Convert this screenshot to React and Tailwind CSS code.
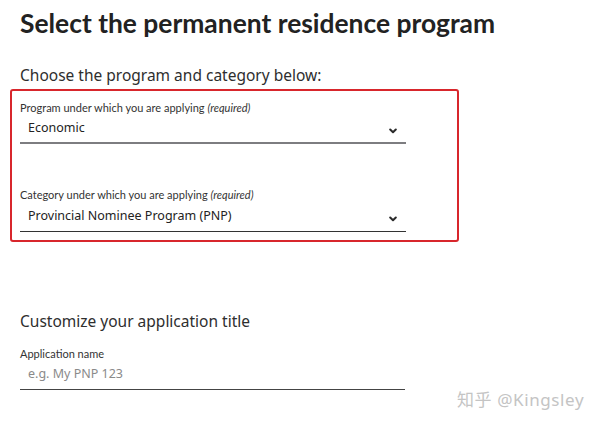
import React from "react";

function Chevron() {
  return (
    <svg width="8" height="6" viewBox="0 0 8 6" className="mt-[5px] shrink-0">
      <path d="M1.2 1.5 L4 4.3 L6.8 1.5" fill="none" stroke="#2a2a2a" strokeWidth="2" strokeLinecap="round" strokeLinejoin="round" />
    </svg>
  );
}

function SelectField({ label, value, rowClass }) {
  return (
    <div className="flex flex-col">
      <div className="font-['Lato'] text-[11px] leading-[14px] text-[#333]">
        {label} <em>(required)</em>
      </div>
      <div className={`w-[386px] flex items-center justify-between pl-[8px] pr-[9px] ${rowClass}`}>
        <span className="font-['Noto_Sans'] text-[12.5px] leading-[18px] text-[#222]">{value}</span>
        <Chevron />
      </div>
    </div>
  );
}

export default function App() {
  return (
    <div className="relative w-[600px] h-[433px] bg-white overflow-hidden">
      <div className="flex flex-col pl-[20px] pt-[7px]">
        <h1 className="font-['Lato'] font-bold text-[26.4px] leading-[32px] text-[#222]">
          Select the permanent residence program
        </h1>
        <div className="mt-[25px] font-['Noto_Sans'] text-[15.5px] leading-[22px] text-[#2e2e2e]">
          Choose the program and category below:
        </div>
      </div>
      <div className="mt-[3px] ml-[10px] w-[449px] h-[153px] border-2 border-[#d8262c] rounded-[3px] pl-[8px] pt-[10px] flex flex-col">
        <SelectField
          label="Program under which you are applying"
          value="Economic"
          rowClass="mt-[4px] pb-[5px] border-b-2 border-[#7d7d80]"
        />
        <div className="h-[44px] shrink-0" />
        <SelectField
          label="Category under which you are applying"
          value="Provincial Nominee Program (PNP)"
          rowClass="mt-[5px] pb-[6px] border-b border-[#333]"
        />
      </div>
      <div className="flex flex-col pl-[20px] mt-[68px]">
        <div className="font-['Noto_Sans'] text-[15.5px] leading-[22px] text-[#2e2e2e]">
          Customize your application title
        </div>
        <div className="mt-[15px] font-['Lato'] text-[11px] leading-[14px] text-[#333]">
          Application name
        </div>
        <div className="mt-[4px] w-[385px] pl-[8px] pb-[6px] border-b-[1.5px] border-[#444] font-['Noto_Sans'] text-[12.5px] leading-[18px] text-[#8a8a8a]">
          e.g. My PNP 123
        </div>
      </div>
      <div
        className="absolute left-[457px] top-[388px] text-[17px] leading-[24px] tracking-[0.6px] text-[#c4c4c4]"
        style={{ fontFamily: "'Noto Sans', 'Noto Sans CJK SC', sans-serif" }}
      >
        知乎 @Kingsley
      </div>
    </div>
  );
}
